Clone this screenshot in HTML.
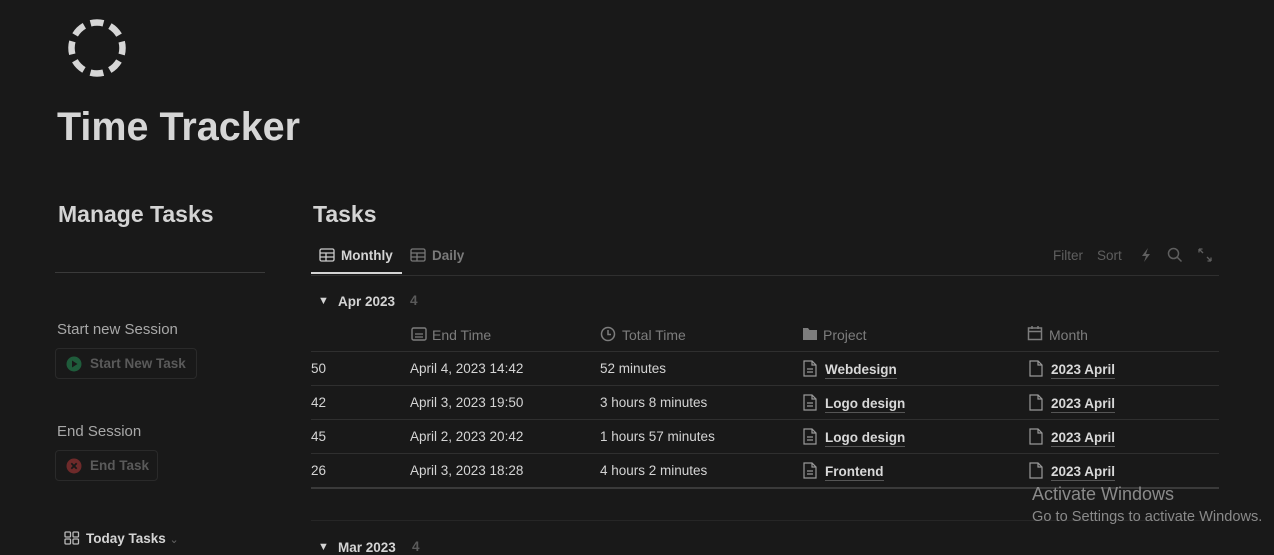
<!DOCTYPE html>
<html><head><meta charset="utf-8"><style>
*{margin:0;padding:0;box-sizing:border-box}
body{width:1274px;height:555px;background:#191919;overflow:hidden;position:relative;font-family:"Liberation Sans",sans-serif;color:#d4d4d4}
.a{position:absolute;white-space:nowrap}
.line{position:absolute;height:1px;background:#2f2f2f}
.h{color:#7d7d7d;font-size:14px}
.c{font-size:13.5px;color:#d4d4d4}
.b{font-size:13.5px;font-weight:bold;color:#d8d8d8;border-bottom:1px solid #555;padding-bottom:1px}
</style></head><body>
<svg class="a" style="left:66px;top:17px" width="62" height="62" viewBox="0 0 62 62"><circle cx="31" cy="31" r="25.5" fill="none" stroke="#d6d6d6" stroke-width="6.5" stroke-dasharray="13 7.03" transform="rotate(-104.6 31 31)"/></svg>
<div class="a" style="left:57px;top:105px;font-size:39.5px;font-weight:bold;color:#d6d6d6">Time Tracker</div>
<div class="a" style="left:58px;top:201px;font-size:23px;font-weight:bold;color:#d4d4d4">Manage Tasks</div>
<div class="line" style="left:55px;top:272px;width:210px;background:#3a3a3a"></div>
<div class="a" style="left:57px;top:321px;font-size:15px;color:#a8a8a8">Start new Session</div>
<div class="a" style="left:55px;top:348px;width:142px;height:31px;border:1px solid #2a2a2a;border-radius:4px"></div>
<svg class="a" style="left:66px;top:356px" width="16" height="16"><circle cx="8" cy="8" r="7.5" fill="#1f5c3b"/><path d="M6 4.5 L11.5 8 L6 11.5Z" fill="#191919"/></svg>
<div class="a" style="left:90px;top:356px;font-size:13.5px;font-weight:bold;color:#5a5a5a">Start New Task</div>
<div class="a" style="left:57px;top:423px;font-size:15px;color:#a8a8a8">End Session</div>
<div class="a" style="left:55px;top:450px;width:103px;height:31px;border:1px solid #2a2a2a;border-radius:4px"></div>
<svg class="a" style="left:66px;top:458px" width="16" height="16"><circle cx="8" cy="8" r="7.5" fill="#6e2a2a"/><path d="M5.3 5.3L10.7 10.7M10.7 5.3L5.3 10.7" stroke="#191919" stroke-width="1.8"/></svg>
<div class="a" style="left:90px;top:458px;font-size:13.5px;font-weight:bold;color:#5a5a5a">End Task</div>
<svg class="a" style="left:64px;top:531px" width="16" height="14" fill="none" stroke="#bbb" stroke-width="1.3"><rect x="1" y="1" width="5.5" height="5" rx="1"/><rect x="9" y="1" width="5.5" height="5" rx="1"/><rect x="1" y="8" width="5.5" height="5" rx="1"/><rect x="9" y="8" width="5.5" height="5" rx="1"/></svg>
<div class="a" style="left:86px;top:531px;font-size:13.5px;font-weight:bold;color:#d4d4d4">Today Tasks <span style="color:#666;font-weight:normal;font-size:11px">&#8964;</span></div>

<div class="a" style="left:313px;top:201px;font-size:23px;font-weight:bold;color:#d4d4d4">Tasks</div>
<svg class="a" style="left:319px;top:248px" width="16" height="14" fill="none" stroke="#ccc" stroke-width="1.3"><rect x="1" y="1" width="14" height="12" rx="1.5"/><path d="M1 5H15M1 9H15M7 5V13"/></svg>
<div class="a" style="left:341px;top:248px;font-size:13.5px;font-weight:bold;color:#d4d4d4">Monthly</div>
<svg class="a" style="left:410px;top:248px" width="16" height="14" fill="none" stroke="#777" stroke-width="1.3"><rect x="1" y="1" width="14" height="12" rx="1.5"/><path d="M1 5H15M1 9H15M7 5V13"/></svg>
<div class="a" style="left:432px;top:248px;font-size:13.5px;font-weight:bold;color:#7a7a7a">Daily</div>
<div class="a" style="left:311px;top:272px;width:91px;height:2px;background:#d4d4d4"></div>
<div class="line" style="left:311px;top:275px;width:908px"></div>
<div class="a" style="left:1053px;top:248px;font-size:13.5px;color:#5f5f5f">Filter</div>
<div class="a" style="left:1097px;top:248px;font-size:13.5px;color:#5f5f5f">Sort</div>
<svg class="a" style="left:1140px;top:248px" width="12" height="14"><path d="M8 0L2 8H6L4 14L10 6H6Z" fill="#5f5f5f"/></svg>
<svg class="a" style="left:1167px;top:247px" width="16" height="16" fill="none" stroke="#5f5f5f" stroke-width="1.5"><circle cx="6.5" cy="6.5" r="5"/><path d="M10 10L14.5 14.5"/></svg>
<svg class="a" style="left:1198px;top:248px" width="14" height="14" fill="none" stroke="#5f5f5f" stroke-width="1.3"><path d="M1 1L5 5M1 1V4.5M1 1H4.5M13 13L9 9M13 13V9.5M13 13H9.5"/></svg>

<div class="a" style="left:318px;top:295px;font-size:11px;color:#d4d4d4">&#9660;</div>
<div class="a" style="left:338px;top:294px;font-size:13.5px;font-weight:bold;color:#d4d4d4">Apr 2023</div>
<div class="a" style="left:410px;top:293px;font-size:13.5px;font-weight:bold;color:#5a5a5a">4</div>

<svg class="a" style="left:411px;top:327px" width="16" height="14" fill="none" stroke="#7d7d7d" stroke-width="1.4"><rect x="1" y="1" width="14" height="12" rx="1.5"/><path d="M4 7H12M4 10H12" stroke-width="1.2"/></svg>
<div class="a h" style="left:432px;top:327px">End Time</div>
<svg class="a" style="left:600px;top:326px" width="16" height="16" fill="none" stroke="#7d7d7d" stroke-width="1.5"><circle cx="8" cy="8" r="6.5"/><path d="M8 4V8.5H11"/></svg>
<div class="a h" style="left:622px;top:327px">Total Time</div>
<svg class="a" style="left:802px;top:327px" width="16" height="14"><path d="M1 1H6L7.5 3H15V13H1Z" fill="#7d7d7d"/></svg>
<div class="a h" style="left:823px;top:327px">Project</div>
<svg class="a" style="left:1027px;top:325px" width="16" height="16" fill="none" stroke="#7d7d7d" stroke-width="1.5"><rect x="1.5" y="3" width="13" height="11.5"/><path d="M1.5 6.5H14.5M5 1V4M11 1V4" /></svg>
<div class="a h" style="left:1049px;top:327px">Month</div>
<div class="line" style="left:311px;top:351px;width:908px"></div>

<div class="a c" style="left:311px;top:361px">50</div><div class="a c" style="left:410px;top:361px">April 4, 2023 14:42</div><div class="a c" style="left:600px;top:361px">52 minutes</div>
<div class="line" style="left:311px;top:385px;width:908px"></div>
<div class="a c" style="left:311px;top:395px">42</div><div class="a c" style="left:410px;top:395px">April 3, 2023 19:50</div><div class="a c" style="left:600px;top:395px">3 hours 8 minutes</div>
<div class="line" style="left:311px;top:419px;width:908px"></div>
<div class="a c" style="left:311px;top:429px">45</div><div class="a c" style="left:410px;top:429px">April 2, 2023 20:42</div><div class="a c" style="left:600px;top:429px">1 hours 57 minutes</div>
<div class="line" style="left:311px;top:453px;width:908px"></div>
<div class="a c" style="left:311px;top:463px">26</div><div class="a c" style="left:410px;top:463px">April 3, 2023 18:28</div><div class="a c" style="left:600px;top:463px">4 hours 2 minutes</div>
<div class="a" style="left:311px;top:487px;width:908px;height:2px;background:#3a3a3a"></div>

<svg class="a" style="left:803px;top:360px" width="14" height="17" fill="none" stroke="#999" stroke-width="1.2"><path d="M1 1H9L13 5V16H1Z M9 1V5H13 M4 9H10M4 12H10"/></svg>
<div class="a b" style="left:825px;top:362px">Webdesign</div>
<svg class="a" style="left:1029px;top:360px" width="14" height="17" fill="none" stroke="#999" stroke-width="1.2"><path d="M1 1H9L13 5V16H1Z M9 1V5H13"/></svg>
<div class="a b" style="left:1051px;top:362px">2023 April</div>

<svg class="a" style="left:803px;top:394px" width="14" height="17" fill="none" stroke="#999" stroke-width="1.2"><path d="M1 1H9L13 5V16H1Z M9 1V5H13 M4 9H10M4 12H10"/></svg>
<div class="a b" style="left:825px;top:396px">Logo design</div>
<svg class="a" style="left:1029px;top:394px" width="14" height="17" fill="none" stroke="#999" stroke-width="1.2"><path d="M1 1H9L13 5V16H1Z M9 1V5H13"/></svg>
<div class="a b" style="left:1051px;top:396px">2023 April</div>

<svg class="a" style="left:803px;top:428px" width="14" height="17" fill="none" stroke="#999" stroke-width="1.2"><path d="M1 1H9L13 5V16H1Z M9 1V5H13 M4 9H10M4 12H10"/></svg>
<div class="a b" style="left:825px;top:430px">Logo design</div>
<svg class="a" style="left:1029px;top:428px" width="14" height="17" fill="none" stroke="#999" stroke-width="1.2"><path d="M1 1H9L13 5V16H1Z M9 1V5H13"/></svg>
<div class="a b" style="left:1051px;top:430px">2023 April</div>

<svg class="a" style="left:803px;top:462px" width="14" height="17" fill="none" stroke="#999" stroke-width="1.2"><path d="M1 1H9L13 5V16H1Z M9 1V5H13 M4 9H10M4 12H10"/></svg>
<div class="a b" style="left:825px;top:464px">Frontend</div>
<svg class="a" style="left:1029px;top:462px" width="14" height="17" fill="none" stroke="#999" stroke-width="1.2"><path d="M1 1H9L13 5V16H1Z M9 1V5H13"/></svg>
<div class="a b" style="left:1051px;top:464px">2023 April</div>

<div class="line" style="left:311px;top:520px;width:908px;background:#262626"></div>
<div class="a" style="left:318px;top:541px;font-size:11px;color:#d4d4d4">&#9660;</div>
<div class="a" style="left:338px;top:540px;font-size:13.5px;font-weight:bold;color:#d4d4d4">Mar 2023</div>
<div class="a" style="left:412px;top:539px;font-size:13.5px;font-weight:bold;color:#5a5a5a">4</div>

<div class="a" style="left:1032px;top:484px;font-size:18px;color:#8a8a8a">Activate Windows</div>
<div class="a" style="left:1032px;top:509px;font-size:14.6px;color:#8a8a8a">Go to Settings to activate Windows.</div>
</body></html>
